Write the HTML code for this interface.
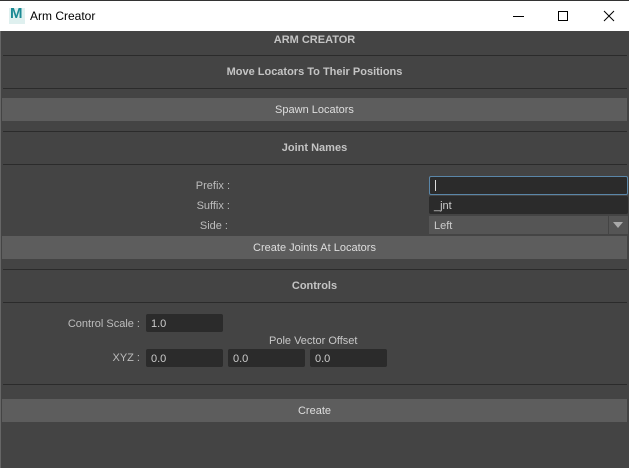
<!DOCTYPE html>
<html><head><style>
*{margin:0;padding:0;box-sizing:border-box}
body{width:629px;height:468px;background:#444;position:relative;overflow:hidden;font-family:"Liberation Sans",sans-serif;font-size:11px;color:#c8c8c8}
.a{position:absolute}
.title{left:0;top:0;width:629px;height:31px;background:#fff;border-top:1px solid #333}
.sep{left:3px;width:624px;height:1px;background:#2b2b2b}
.btn{left:2px;width:625px;height:23px;background:#5d5d5d;text-align:center;line-height:25px;color:#dedede}
.lbl{text-align:center;width:629px;left:0;font-weight:bold;color:#c4c4c4}
.f{background:#2b2b2b;height:18px;line-height:21px;padding-left:5px;color:#ccc;border-radius:2px}
.r{text-align:right;color:#bdbdbd}
</style></head><body>
<div class="a title">
 <div class="a" style="left:9px;top:7px;width:16px;height:16px;background:#dff0ef"></div>
 <div class="a" style="left:10px;top:4px;font:bold 15px 'Liberation Sans',sans-serif;color:#1b8a94">M</div>
 <div class="a" style="left:30px;top:8px;font-size:12px;color:#000">Arm Creator</div>
 <div class="a" style="left:513px;top:15px;width:11px;height:1px;background:#000"></div>
 <div class="a" style="left:558px;top:10px;width:10px;height:10px;border:1px solid #000"></div>
 <svg class="a" style="left:603px;top:9px" width="12" height="12"><path d="M1 1L11 11M11 1L1 11" stroke="#000" stroke-width="1"/></svg>
</div>
<div class="a" style="left:0;top:31px;width:1px;height:437px;background:#666"></div>
<div class="a lbl" style="top:34px">ARM CREATOR</div>
<div class="a sep" style="top:55px"></div>
<div class="a lbl" style="top:66px">Move Locators To Their Positions</div>
<div class="a sep" style="top:88px"></div>
<div class="a btn" style="top:98px">Spawn Locators</div>
<div class="a sep" style="top:131px"></div>
<div class="a lbl" style="top:142px">Joint Names</div>
<div class="a sep" style="top:164px"></div>
<div class="a r" style="left:150px;width:80px;top:180px">Prefix :</div>
<div class="a r" style="left:150px;width:80px;top:200px">Suffix :</div>
<div class="a r" style="left:150px;width:78px;top:220px">Side :</div>
<div class="a f" style="left:429px;top:176px;width:199px;height:19px;border:1px solid #5a86a8"><div class="a" style="left:5px;top:3px;width:1px;height:11px;background:#ddd"></div></div>
<div class="a f" style="left:429px;top:196px;width:199px">_jnt</div>
<div class="a f" style="left:429px;top:216px;width:179px;background:#555;border-radius:0">Left</div>
<div class="a" style="left:609px;top:216px;width:19px;height:18px;background:#555"></div>
<svg class="a" style="left:613px;top:222px" width="10" height="7"><path d="M0 0H10L5 6Z" fill="#aaa"/></svg>
<div class="a btn" style="top:236px">Create Joints At Locators</div>
<div class="a sep" style="top:269px"></div>
<div class="a lbl" style="top:280px">Controls</div>
<div class="a sep" style="top:302px"></div>
<div class="a r" style="left:40px;width:100px;top:318px">Control Scale :</div>
<div class="a f" style="left:146px;top:314px;width:77px">1.0</div>
<div class="a" style="left:269px;top:335px;color:#c8c8c8">Pole Vector Offset</div>
<div class="a r" style="left:80px;width:60px;top:352px">XYZ :</div>
<div class="a f" style="left:146px;top:349px;width:77px">0.0</div>
<div class="a f" style="left:228px;top:349px;width:77px">0.0</div>
<div class="a f" style="left:310px;top:349px;width:77px">0.0</div>
<div class="a sep" style="top:384px"></div>
<div class="a btn" style="top:399px">Create</div>
</body></html>
